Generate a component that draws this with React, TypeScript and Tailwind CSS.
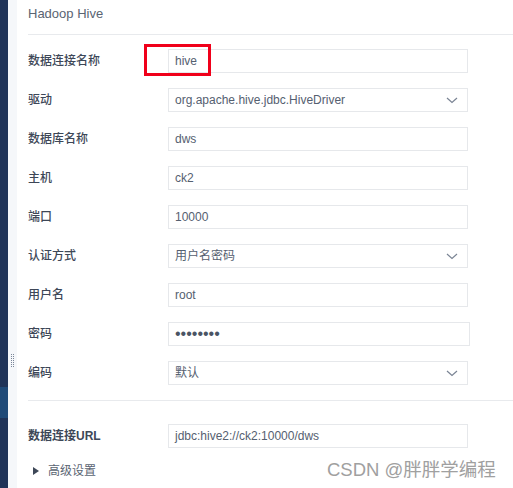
import React from "react";

const Chevron = () => (
  <svg width="12" height="7" viewBox="0 0 12 7" className="absolute right-[9px] top-[8px]">
    <path d="M1 1l5 4.5L11 1" fill="none" stroke="#7a8494" strokeWidth="1.2" />
  </svg>
);

type Row = { label: string; value: string; select?: boolean; pwd?: boolean; wide?: boolean };

const rows: Row[] = [
  { label: "数据连接名称", value: "hive" },
  { label: "驱动", value: "org.apache.hive.jdbc.HiveDriver", select: true },
  { label: "数据库名称", value: "dws" },
  { label: "主机", value: "ck2" },
  { label: "端口", value: "10000" },
  { label: "认证方式", value: "用户名密码", select: true },
  { label: "用户名", value: "root" },
  { label: "密码", value: "••••••••", pwd: true, wide: true },
  { label: "编码", value: "默认", select: true },
];

function Field({ r, first }: { r: Row; first?: boolean }) {
  return (
    <div className="flex items-center h-[24px]">
      <div className="w-[140px] text-[12px] text-[#3d4757] font-medium">{r.label}</div>
      <div className={`relative h-[24px] ${r.wide ? "w-[302px]" : "w-[300px]"} border border-[#e6e8eb] bg-white flex items-center pl-[6px] text-[12px] text-[#556070]`}>
        {r.pwd ? (
          <span className="text-[16px] leading-none text-[#4a5464]">{r.value}</span>
        ) : (
          <span>{r.value}</span>
        )}
        {r.select && <Chevron />}
        {first && (
          <div className="absolute left-[-25px] top-[-6px] w-[67px] h-[32px] border-[3px] border-[#f0001a]" />
        )}
      </div>
    </div>
  );
}

export default function App() {
  return (
    <div
      className="w-[513px] h-[488px] flex bg-white overflow-hidden relative"
      style={{ fontFamily: '"Liberation Sans", "Noto Sans CJK SC", sans-serif' }}
    >
      <div className="w-[8px] h-full bg-[#1f3358] flex flex-col">
        <div className="h-[387px]" />
        <div className="h-[31px] bg-[#1f4a78]" />
      </div>
      <div className="w-[9px] h-full bg-[#f5f7fa] flex flex-col items-center">
        <div className="mt-[354px] grid grid-cols-2 gap-x-[1px] gap-y-[1px]">
          {Array.from({ length: 14 }).map((_, i) => (
            <div key={i} className="w-[1px] h-[1px] bg-[#7a8598]" />
          ))}
        </div>
      </div>
      <div className="flex-1 pl-[11px]">
        <div className="h-[34px] flex items-center text-[13px] text-[#5a6472] pb-[6px]">Hadoop Hive</div>
        <div className="h-px bg-[#e8eaed]" />
        <div className="flex flex-col gap-[15px] pt-[14px]">
          {rows.map((r, i) => (
            <Field key={i} r={r} first={i === 0} />
          ))}
        </div>
        <div className="h-px bg-[#e8eaed] mt-[15px]" />
        <div className="mt-[23px] flex items-center h-[24px]">
          <div className="w-[140px] text-[12px] text-[#3d4757] font-bold">数据连接URL</div>
          <div className="h-[24px] w-[300px] border border-[#e6e8eb] flex items-center pl-[6px] text-[12px] text-[#556070]">
            jdbc:hive2://ck2:10000/dws
          </div>
        </div>
        <div className="mt-[11px] flex items-center h-[24px] pl-[5px] text-[12px] text-[#5a6472]">
          <svg width="6" height="8" viewBox="0 0 6 8" className="mr-[9px]">
            <path d="M0 0L6 4L0 8Z" fill="#3d4757" />
          </svg>
          高级设置
        </div>
      </div>
      <div
        className="absolute left-[327px] top-[456px] text-[18.5px] text-[#a0a0a0]"
        style={{ textShadow: "0 0 2px #fff" }}
      >
        CSDN @胖胖学编程
      </div>
    </div>
  );
}
